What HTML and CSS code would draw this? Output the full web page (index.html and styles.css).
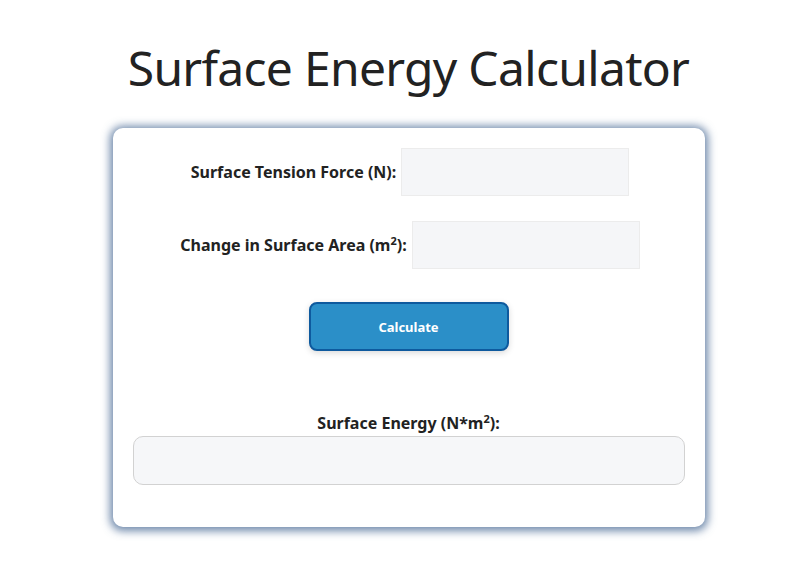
FILE: index.html
```html
<!DOCTYPE html>
<html>
<head>
<meta charset="utf-8">
<link rel="stylesheet" href="styles.css">
</head>
<body>
<h1 class="title">Surface Energy Calculator</h1>
<div class="card">
  <div class="row">
    <label class="label">Surface Tension Force (N):</label>
    <input class="field" type="text">
  </div>
  <div class="row">
    <label class="label">Change in Surface Area (m<sup>2</sup>):</label>
    <input class="field" type="text">
  </div>
  <div class="actions">
    <button class="btn">Calculate</button>
  </div>
  <div class="result">
    <div class="result-label">Surface Energy (N*m<sup>2</sup>):</div>
    <div class="result-box"></div>
  </div>
</div>
</body>
</html>
```
FILE: styles.css
```css
html, body {
  margin: 0;
  padding: 0;
  background: #ffffff;
}
body {
  font-family: "Noto Sans", "Open Sans", sans-serif;
  color: #222;
  display: flex;
  flex-direction: column;
  align-items: center;
  padding-left: 20px;
  padding-bottom: 40px;
}
.title {
  font-weight: 400;
  font-size: 48px;
  line-height: 1;
  margin: 44px 0 0 0;
  color: #222;
  letter-spacing: -0.7px;
}
.card {
  margin-top: 36px;
  width: 552px;
  padding: 20px 20px 42px 20px;
  background: #fff;
  border-radius: 10px;
  box-shadow: 0 1px 9px 3px rgba(75, 108, 150, 0.8);
  display: flex;
  flex-direction: column;
}
.row {
  display: flex;
  justify-content: center;
  align-items: center;
  gap: 5px;
  margin-bottom: 25px;
  padding-left: 3px;
}
.label {
  font-weight: 700;
  font-size: 16px;
  color: #222;
}
sup {
  font-size: 11px;
  line-height: 0;
}
.field {
  width: 228px;
  height: 48px;
  box-sizing: border-box;
  border: 1px solid #ececec;
  background: #f5f6f8;
  margin: 0;
  padding: 0;
}
.actions {
  display: flex;
  justify-content: center;
  margin-top: 8px;
}
.btn {
  width: 200px;
  height: 49px;
  background: #2b8fc8;
  border: 2px solid #0e5a9e;
  border-radius: 8px;
  color: #fff;
  font-family: "Noto Sans", sans-serif;
  font-weight: 700;
  font-size: 13px;
  box-shadow: 0 2px 6px rgba(0,0,0,0.15);
}
.result {
  margin-top: 61px;
  display: flex;
  flex-direction: column;
  align-items: center;
}
.result-label {
  font-weight: 700;
  font-size: 16px;
  margin-bottom: 2px;
}
.result-box {
  width: 100%;
  height: 49px;
  box-sizing: border-box;
  border: 1px solid #d2d2d2;
  border-radius: 10px;
  background: #f6f7f9;
}
```
